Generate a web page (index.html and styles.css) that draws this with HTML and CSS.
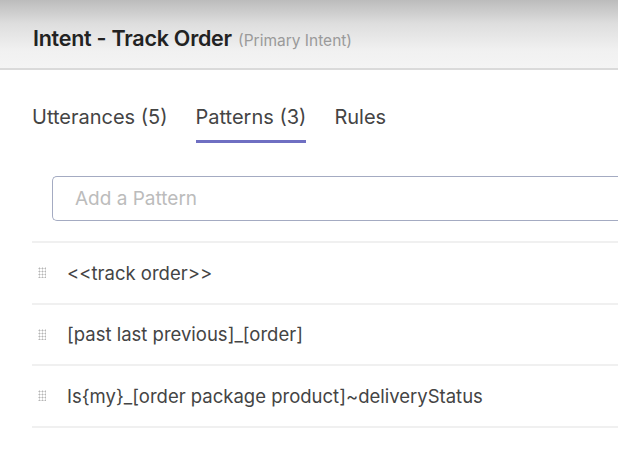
FILE: index.html
```html
<!DOCTYPE html>
<html>
<head>
<meta charset="utf-8">
<link rel="stylesheet" href="styles.css">
</head>
<body>
<header class="header">
  <h1 class="title">Intent - Track Order <span class="sub">(Primary Intent)</span></h1>
</header>
<main class="content">
  <nav class="tabs">
    <span class="tab">Utterances (5)</span>
    <span class="tab active">Patterns (3)</span>
    <span class="tab">Rules</span>
  </nav>
  <div class="input-wrap">
    <div class="input">Add a Pattern</div>
  </div>
  <ul class="list">
    <li class="row"><span class="handle"></span><span class="text">&lt;&lt;track order&gt;&gt;</span></li>
    <li class="row"><span class="handle"></span><span class="text">[past last previous]_[order]</span></li>
    <li class="row"><span class="handle"></span><span class="text">Is{my}_[order package product]~deliveryStatus</span></li>
  </ul>
</main>
</body>
</html>
```
FILE: styles.css
```css
* { box-sizing: border-box; }
html, body { margin: 0; padding: 0; background: #fff; }
body { font-family: Inter, "Noto Sans", sans-serif; color: #3a3a3a; width: 618px; height: 453px; overflow: hidden; }
.header {
  height: 70px;
  background: linear-gradient(to bottom, #bcbcbc 0%, #dedede 35%, #f1f1f1 75%, #f4f4f4 100%);
  border-bottom: 2px solid #dadada;
  padding: 24px 0 0 33px;
}
.title { margin: 0; font-size: 21.5px; font-weight: 600; color: #222; letter-spacing: -0.25px; line-height: 28px; }
.sub { font-size: 15.5px; font-weight: 400; color: #9a9a9a; letter-spacing: 0; margin-left: 1px; }
.content { padding-left: 32px; }
.tabs { display: flex; gap: 28px; padding-top: 33px; height: 72px; }
.tab { font-size: 20px; color: #444; height: 40px; line-height: 28px; }
.tab.active { border-bottom: 3px solid #6f6fc2; }
.input-wrap { padding: 34px 0 20px 20px; }
.input {
  height: 45px; border: 1.5px solid #a4abc2; border-right: none; border-radius: 5px 0 0 5px;
  padding: 0 0 0 22px; font-size: 19px; color: #bcbcbc; line-height: 44px;
}
.list { list-style: none; margin: 0; padding: 0; border-top: 2px solid #f0f0f0; }
.row { height: 61.5px; border-bottom: 2px solid #f0f0f0; display: flex; align-items: center; padding-left: 6px; }
.handle {
  width: 8px; height: 11px; margin-right: 21px;
  background-image: radial-gradient(circle, #b5b5b5 0.9px, transparent 1.1px);
  background-size: 3px 3px;
}
.text { font-size: 18.5px; color: #444; }
```
